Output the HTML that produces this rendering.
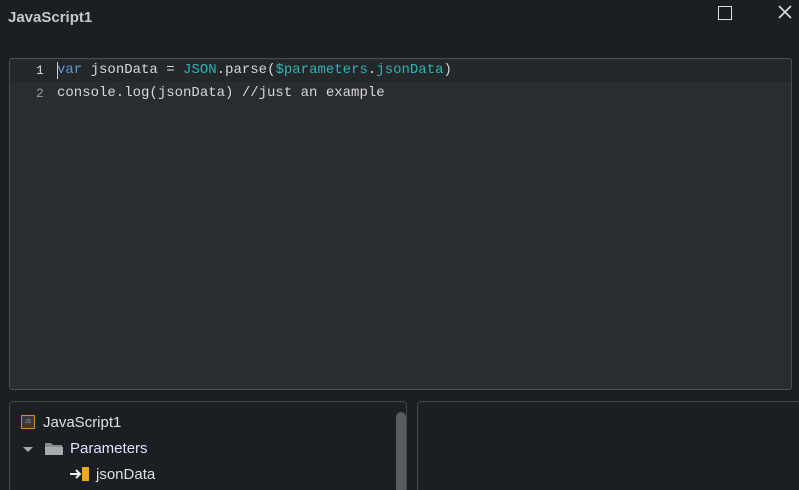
<!DOCTYPE html>
<html><head><style>
html,body{margin:0;width:799px;height:490px;overflow:hidden;}
body{background:#1b1e22;position:relative;font-family:"Liberation Sans",sans-serif;}
.title{position:absolute;left:8px;top:9px;color:#c8c8c8;font-size:15px;font-weight:bold;}
.ed{position:absolute;left:9px;top:58px;width:781px;height:330px;background:#2a2d30;border:1px solid #4a4d50;border-radius:3px;}
.line1{position:absolute;left:0;top:1px;width:781px;height:22px;background:#25282b;}
.code{position:absolute;font-family:"Liberation Mono",monospace;font-size:14px;color:#d6d6d6;white-space:pre;}
.ln{position:absolute;font-family:"Liberation Mono",monospace;font-size:13px;color:#9a9a9a;}
.p1{position:absolute;left:9px;top:401px;width:396px;height:100px;background:#1b1e22;border:1px solid #45484b;border-radius:4px;}
.p2{position:absolute;left:417px;top:401px;width:390px;height:100px;border:1px solid #45484b;border-radius:4px;}
.tr{position:absolute;color:#e0e0e0;font-size:15px;}
</style></head><body>
<div class="title">JavaScript1</div>
<div style="position:absolute;left:718px;top:6px;width:12px;height:12px;border:1.5px solid #ddd"></div>
<svg style="position:absolute;left:778px;top:5px" width="14" height="14"><path d="M1 1L13 13M13 1L1 13" stroke="#ddd" stroke-width="1.6"/></svg>
<div class="ed">
<div class="line1"></div>
<div class="ln" style="left:26px;top:4px;color:#e0e0e0">1</div>
<div class="ln" style="left:26px;top:27px">2</div>
<div style="position:absolute;left:47px;top:3px;width:1px;height:17px;background:#ccc"></div>
<div class="code" style="left:47px;top:3px"><span style="color:#5a9bd5">var</span> jsonData = <span style="color:#2fb3b3">JSON</span>.parse(<span style="color:#2fb3b3">$parameters</span>.<span style="color:#2fb3b3">jsonData</span>)</div>
<div class="code" style="left:47px;top:26px">console.log(jsonData) //just an example</div>
</div>
<div class="p1">
<div style="position:absolute;left:11px;top:13px;width:12px;height:12px;border:1.5px solid #d08a2a;background:#3a3a3a;font-size:5px;color:#aaa;text-align:center;line-height:12px">JS</div>
<div class="tr" style="left:33px;top:12px">JavaScript1</div>
<div style="position:absolute;left:13px;top:45px;border-left:5px solid transparent;border-right:5px solid transparent;border-top:5px solid #aaa"></div>
<svg style="position:absolute;left:34px;top:38px" width="20" height="16"><path d="M1 3h6l2 2h9v10H1z" fill="#8a8d90"/><path d="M1 7h18v8H1z" fill="#a9acaf"/></svg>
<div class="tr" style="left:60px;top:38px;color:#dde4ff">Parameters</div>
<svg style="position:absolute;left:59px;top:64px" width="22" height="16"><path d="M1 8h10M7 4l4 4-4 4" stroke="#eee" stroke-width="2" fill="none"/><rect x="13" y="1" width="7" height="14" fill="#f0a818"/></svg>
<div class="tr" style="left:86px;top:64px">jsonData</div>
<div style="position:absolute;left:386px;top:10px;width:10px;height:90px;background:#5a5d60;border-radius:5px"></div>
</div>
<div class="p2"></div>
</body></html>
